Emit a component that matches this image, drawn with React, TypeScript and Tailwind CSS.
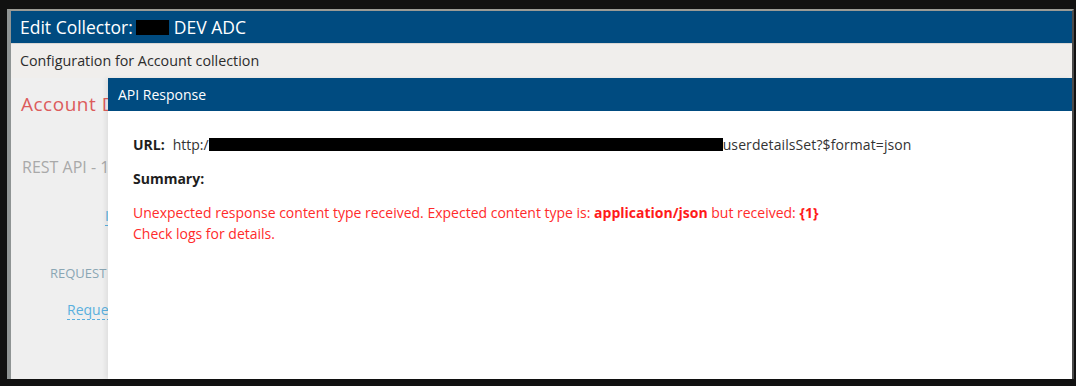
import React from "react";

const font = { fontFamily: '"Open Sans", "Noto Sans", "Liberation Sans", sans-serif' };

function Redacted({ w, h = 14 }: { w: number; h?: number }) {
    return <span className="inline-block bg-black align-middle" style={{ width: w, height: h }} />;
}

export default function App() {
    return (
        <div className="h-[386px] w-[1076px] overflow-hidden bg-[#111111] pl-[7px] pt-[9px]" style={font}>
            <div className="relative flex h-[370px] w-[1067px] flex-col border-t-2 border-l-4 border-r-2 border-t-[#9b9b95] border-l-[#8f9494] border-r-[#4a4a4a]">
                {/* window title */}
                <div className="flex h-[32px] items-center bg-[#004b80] pl-[9px] text-[17.5px] text-white">
                    <span>Edit Collector:</span>
                    <span className="ml-[3px] inline-block h-[15px] w-[33px] bg-black" />
                    <span className="ml-[5px]">DEV ADC</span>
                </div>
                <div className="flex h-[35px] items-center border-t border-[#d8d6d4] bg-[#f0eeec] pl-[9px] text-[14.3px] text-[#2c2c2c]">
                    Configuration for Account collection
                </div>

                {/* page content behind the dialog */}
                <div className="flex-1 bg-[#efefef]">
                    <div className="w-[97px] overflow-hidden whitespace-nowrap pl-[10px]">
                        <div className="mt-[12px] text-[19px] tracking-[0.5px] text-[#dc5c5c]">Account Details</div>
                        <div className="mt-[36px] pl-[1px] text-[16px] text-[#a9a9a9]">REST API - 1</div>
                        <div className="mt-[26px] pl-[84px] text-[14px] text-[#5aafde]">
                            <span className="border-b border-dashed border-[#5aafde]">I</span>
                        </div>
                        <div className="mt-[38px] pl-[29px] text-[13px] text-[#8aa6b4]">REQUEST</div>
                        <div className="mt-[16px] pl-[46px] text-[14px] text-[#5aafde]">
                            <span className="border-b border-dashed border-[#5aafde]">Request</span>
                        </div>
                    </div>
                </div>

                {/* API response dialog */}
                <div className="absolute bottom-0 left-[97px] right-0 top-[67px] flex flex-col bg-white shadow-[-3px_0_4px_rgba(0,0,0,0.06)]">
                    <div className="flex h-[33px] items-center bg-[#004b80] pl-[10px] text-[14px] text-white">
                        API Response
                    </div>
                    <div className="pl-[25px] pt-[23px] text-[14px] text-[#333]">
                        <div className="flex items-center">
                            <span className="font-bold text-[#1e1e1e]">URL:</span>
                            <span className="ml-[8px]">http:/</span>
                            <Redacted w={514} h={13} />
                            <span className="tracking-[0.1px]">userdetailsSet?$format=json</span>
                        </div>
                        <div className="mt-[13px] font-bold text-[#1e1e1e]">Summary:</div>
                        <div className="mt-[13px] leading-[21px] text-[#ff2b2b]">
                            <div>
                                Unexpected response content type received. Expected content type is:{" "}
                                <span className="font-bold text-[#ff1a1a]">application/json</span> but received:{" "}
                                <span className="font-bold text-[#ff1a1a]">{"{1}"}</span>
                            </div>
                            <div>Check logs for details.</div>
                        </div>
                    </div>
                </div>
            </div>
        </div>
    );
}
